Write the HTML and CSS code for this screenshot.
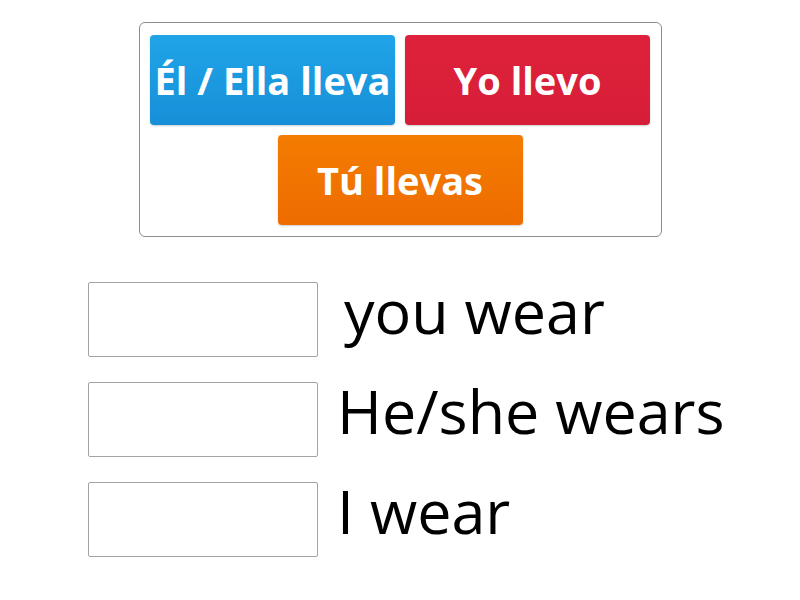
FILE: index.html
```html
<!DOCTYPE html>
<html lang="es">
<head>
  <meta charset="UTF-8">
  <title>Match up</title>
  <meta name="viewport" content="width=device-width, initial-scale=1.0"/>
  <link rel="stylesheet" href="styles.css">
</head>
<body>
  <div class="bank">
    <div class="tile blue">Él / Ella lleva</div>
    <div class="tile red">Yo llevo</div>
    <div class="tile orange">Tú llevas</div>
  </div>

  <div class="answers">
    <div class="row">
      <div class="slot"></div>
      <div class="label label-y">you wear</div>
    </div>
    <div class="row">
      <div class="slot"></div>
      <div class="label">He/she wears</div>
    </div>
    <div class="row">
      <div class="slot"></div>
      <div class="label">I wear</div>
    </div>
  </div>
</body>
</html>
```

FILE: styles.css
```css
body {
  margin: 0;
  background: #fff;
  font-family: "Open Sans", Arial, sans-serif;
  color: #000;
}

.bank {
  width: 523px;
  box-sizing: border-box;
  margin: 22px auto 0;
  padding: 7px 5px 6px;
  border: 1px solid #8c8c8c;
  border-radius: 6px;
  display: flex;
  flex-wrap: wrap;
  justify-content: center;
}

.tile {
  width: 245px;
  height: 90px;
  margin: 5px;
  border-radius: 4px;
  display: flex;
  align-items: center;
  justify-content: center;
  color: #fff;
  font-size: 38px;
  font-weight: 700;
  white-space: nowrap;
  box-shadow: 0 1px 2px rgba(0,0,0,0.2);
}

.blue {
  background: linear-gradient(#20a4e8, #178fd8);
}

.red {
  background: linear-gradient(#df223c, #d61d37);
}

.orange {
  background: linear-gradient(#f47c02, #ee6c00);
}

/* answer rows */
.answers {
  margin-top: 45px;
  padding-left: 88px;
}

.row {
  display: flex;
  align-items: flex-start;
  margin-bottom: 25px;
}

.slot {
  width: 230px;
  height: 75px;
  box-sizing: border-box;
  border: 1px solid #a3a3a3;
  border-radius: 2px;
  background: #fff;
}

.label {
  margin-left: 19px;
  font-size: 61px;
  line-height: 57px;
  white-space: nowrap;
}

.label-y {
  margin-left: 26px;
}
```
